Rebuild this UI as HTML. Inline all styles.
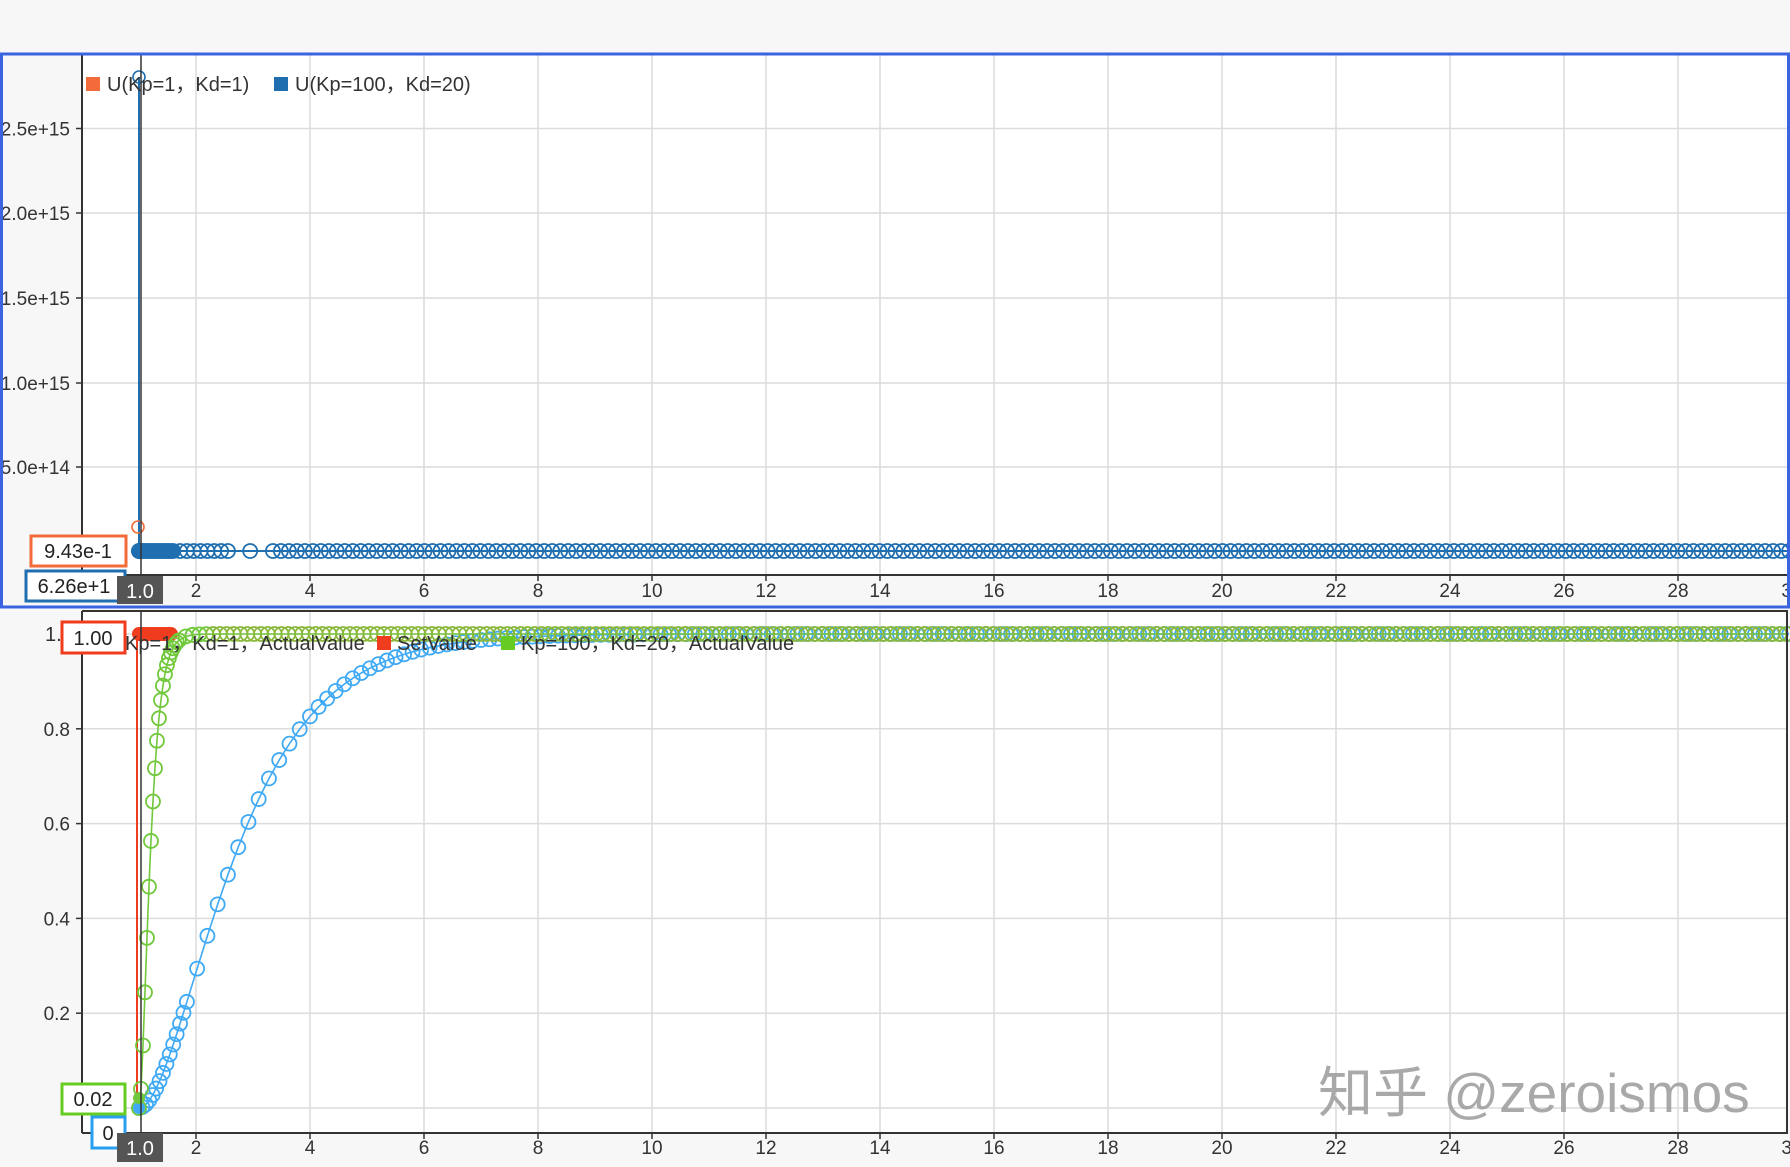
<!DOCTYPE html>
<html><head><meta charset="utf-8"><style>
html,body{margin:0;padding:0;background:#f7f7f7;width:1790px;height:1167px;overflow:hidden}
svg{display:block}
text{font-family:"Liberation Sans","Noto Sans CJK SC",sans-serif}
</style></head><body>
<svg id="s" width="1790" height="1167" xmlns="http://www.w3.org/2000/svg">
<rect x="0" y="0" width="1790" height="1167" fill="#f7f7f7"/>
<rect x="82" y="54" width="1706" height="521" fill="#fff"/>
<rect x="82" y="611" width="1706" height="522" fill="#fff"/>
<g id="grid" stroke="#dcdcdc" stroke-width="1.5"></g>
<g id="data"></g>
<g stroke="#333" stroke-width="2" fill="none">
<line x1="82" y1="54" x2="82" y2="575"/><line x1="82" y1="575" x2="1788" y2="575"/>
<line x1="82" y1="611" x2="82" y2="1133"/><line x1="82" y1="1133" x2="1788" y2="1133"/>
<line x1="82" y1="611" x2="1788" y2="611"/><line x1="1787" y1="611" x2="1787" y2="1133"/>
</g>
<g stroke="#333" stroke-width="1.5"><line x1="141" y1="54" x2="141" y2="575"/><line x1="141" y1="611" x2="141" y2="1133"/></g>
<g id="labels" font-size="19" fill="#333"></g>
<g font-size="20" fill="#333">
<rect x="86" y="77" width="14" height="14" fill="#f26b38"/><text x="107" y="91">U(Kp=1，Kd=1)</text>
<rect x="274" y="77" width="14" height="14" fill="#1f6eb0"/><text x="295" y="91">U(Kp=100，Kd=20)</text>
<text x="125" y="650">Kp=1，Kd=1，ActualValue</text>
<rect x="377" y="636" width="14" height="14" fill="#f03c1e"/><text x="397" y="650">SetValue</text>
<rect x="501" y="636" width="14" height="14" fill="#66cc22"/><text x="521" y="650">Kp=100，Kd=20，ActualValue</text>
</g>
<g font-size="20">
<rect x="31" y="536" width="95" height="30" fill="#fff" stroke="#f26b38" stroke-width="3"/><text x="78" y="558" text-anchor="middle" fill="#222">9.43e-1</text>
<rect x="26" y="571" width="99" height="30" fill="#fff" stroke="#1f6eb0" stroke-width="3"/><text x="74" y="593" text-anchor="middle" fill="#222">6.26e+1</text>
<rect x="117" y="576" width="46" height="28" fill="#555"/><text x="140" y="598" text-anchor="middle" fill="#fff">1.0</text>
<text x="45" y="641" fill="#333">1.</text>
<rect x="62" y="622" width="63" height="31" fill="#fff" stroke="#f03c1e" stroke-width="3"/><text x="93" y="645" text-anchor="middle" fill="#222">1.00</text>
<rect x="62" y="1084" width="63" height="30" fill="#fff" stroke="#66cc22" stroke-width="3"/><text x="93" y="1106" text-anchor="middle" fill="#222">0.02</text>
<rect x="92" y="1117" width="33" height="31" fill="#fff" stroke="#2a9ff0" stroke-width="3"/><text x="108" y="1140" text-anchor="middle" fill="#222">0</text>
<rect x="117" y="1133" width="46" height="29" fill="#555"/><text x="140" y="1155" text-anchor="middle" fill="#fff">1.0</text>
</g>
<rect x="1.5" y="54" width="1787" height="553" fill="none" stroke="#3a64e0" stroke-width="3"/>
<text x="1318" y="1112" font-size="55" fill="#9a9a9a" fill-opacity="0.85" font-family="'Liberation Sans','Noto Sans CJK SC',sans-serif">知乎 @zeroismos</text>
</svg>
<script>
var NS="http://www.w3.org/2000/svg";
function X(t){return 82+57*t;}
function el(p,n,a,txt){var e=document.createElementNS(NS,n);for(var k in a)e.setAttribute(k,a[k]);if(txt!=null)e.textContent=txt;document.getElementById(p).appendChild(e);return e;}
for(var t=2;t<=30;t+=2){el("grid","line",{x1:X(t),y1:54,x2:X(t),y2:575});el("grid","line",{x1:X(t),y1:611,x2:X(t),y2:1133});
 el("labels","text",{x:X(t),y:597,"text-anchor":"middle"},t);el("labels","text",{x:X(t),y:1154,"text-anchor":"middle"},t);
 el("labels","line",{x1:X(t),y1:575,x2:X(t),y2:581,stroke:"#333","stroke-width":1.5});el("labels","line",{x1:X(t),y1:1133,x2:X(t),y2:1139,stroke:"#333","stroke-width":1.5});}
var ty=[[128.5,"2.5e+15"],[213,"2.0e+15"],[298,"1.5e+15"],[383,"1.0e+15"],[467,"5.0e+14"]];
ty.forEach(function(a){el("grid","line",{x1:82,y1:a[0],x2:1788,y2:a[0]});el("labels","text",{x:70,y:a[0]+7,"text-anchor":"end"},a[1]);el("labels","line",{x1:76,y1:a[0],x2:82,y2:a[0],stroke:"#333","stroke-width":1.5});});
function Y2(v){return 1108-474*v;}
[[0.8,"0.8"],[0.6,"0.6"],[0.4,"0.4"],[0.2,"0.2"],[0,""],[1,""]].forEach(function(a){var y=Y2(a[0]);el("grid","line",{x1:82,y1:y,x2:1788,y2:y});if(a[1]){el("labels","text",{x:70,y:y+7,"text-anchor":"end"},a[1]);}el("labels","line",{x1:76,y1:y,x2:82,y2:y,stroke:"#333","stroke-width":1.5});});
var ts=[];for(var t=1.0;t<1.6;t+=0.03)ts.push(t);for(var t=1.6;t<2.6;t+=0.12)ts.push(t);ts.push(2.95);for(var t=3.35;t<=30;t+=0.14)ts.push(t);
el("data","line",{x1:138,y1:551,x2:1788,y2:551,stroke:"#1f6eb0","stroke-width":2});
el("data","line",{x1:139,y1:551,x2:139,y2:77,stroke:"#1f6eb0","stroke-width":2});
el("data","circle",{cx:139,cy:77,r:6,fill:"none",stroke:"#1f6eb0","stroke-width":1.6});
el("data","circle",{cx:138,cy:527,r:6,fill:"none",stroke:"#f26b38","stroke-width":1.6});
el("data","circle",{cx:139,cy:551,r:8,fill:"#1f6eb0"});
ts.forEach(function(t){el("data","circle",{cx:X(t),cy:551,r:7,fill:"none",stroke:"#1f6eb0","stroke-width":1.8});});
el("data","line",{x1:137,y1:Y2(0),x2:137,y2:634,stroke:"#f03c1e","stroke-width":2});
for(var t=1;t<1.6;t+=0.04)el("data","circle",{cx:X(t),cy:634,r:6.5,fill:"#f03c1e",stroke:"#f03c1e"});
function blue(t){var s=t-1,a=1.06;return s<=0?0:1-(1+a*s)*Math.exp(-a*s);}
function green(t){var s=t-1,a=9;return s<=0?0:1-(1+a*s)*Math.exp(-a*s);}
var bp=[],gp=[];var bt=[],gt=[];
for(var s=0;s<=29;s+=(s<0.8?0.06:(s<3?0.18:0.15))){bt.push(1+s);}
for(var s=0;s<=29;s+=(s<0.7?0.035:0.12)){gt.push(1+s);}
bt.forEach(function(t){bp.push(X(t)+","+Y2(blue(t)));});
gt.forEach(function(t){gp.push(X(t)+","+Y2(green(t)));});
el("data","polyline",{points:bp.join(" "),fill:"none",stroke:"#3fa9f5","stroke-width":1.6});
bt.forEach(function(t){el("data","circle",{cx:X(t),cy:Y2(blue(t)),r:7,fill:"none",stroke:"#3fa9f5","stroke-width":1.8});});
el("data","polyline",{points:gp.join(" "),fill:"none",stroke:"#70c83a","stroke-width":1.6});
gt.forEach(function(t){el("data","circle",{cx:X(t),cy:Y2(green(t)),r:7,fill:"none",stroke:(t>2.2?"#8ab83c":"#70c83a"),"stroke-width":1.8});});
el("data","circle",{cx:139,cy:1108,r:6,fill:"#3fa9f5"});el("data","circle",{cx:139,cy:1098,r:6,fill:"#70c83a"});
</script>
</body></html>
